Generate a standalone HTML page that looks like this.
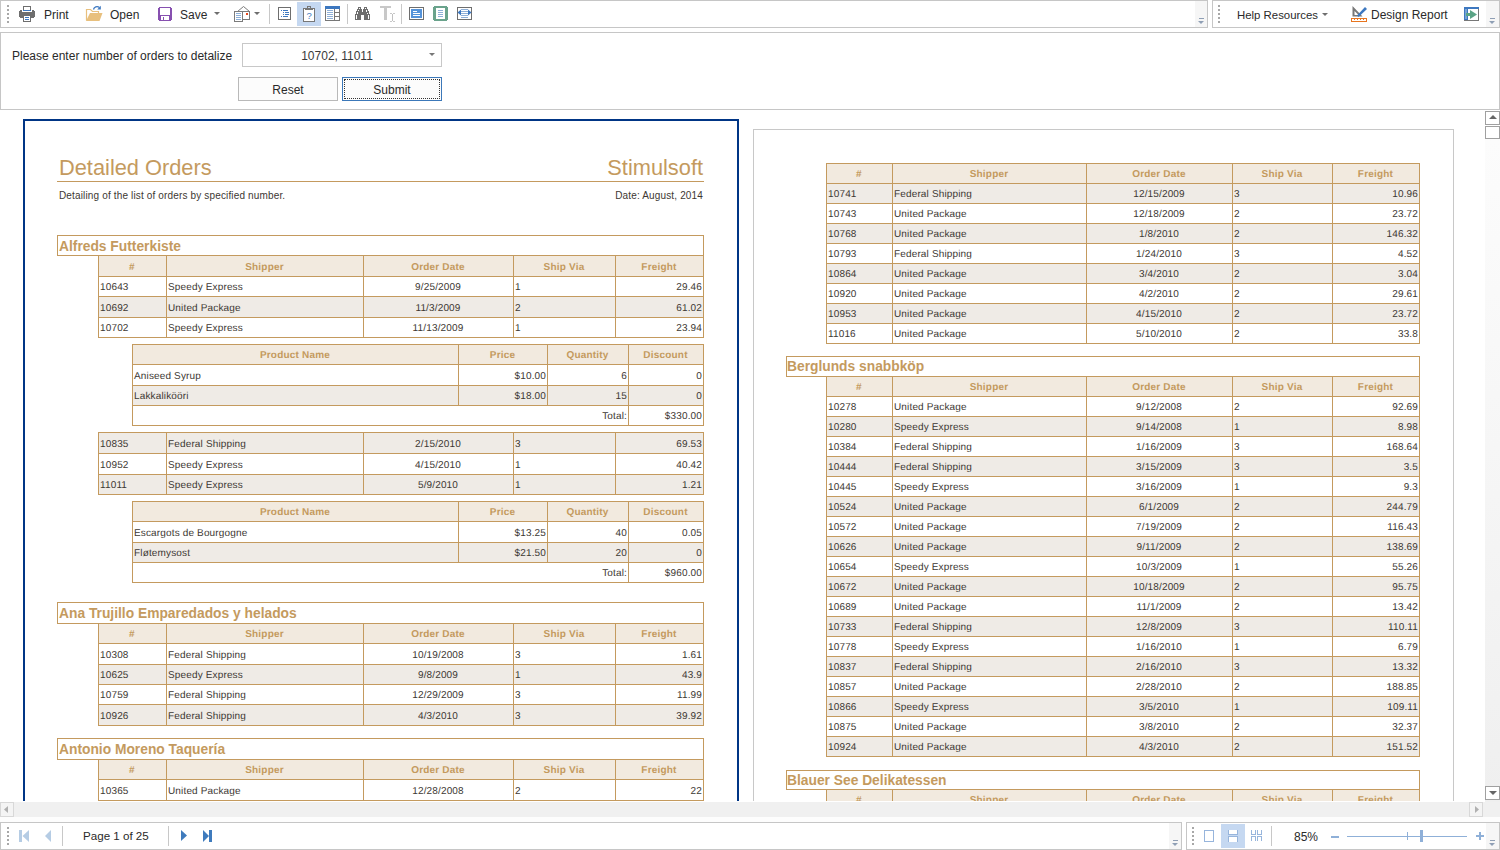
<!DOCTYPE html>
<html><head><meta charset="utf-8"><title>Report Viewer</title>
<style>
*{margin:0;padding:0;box-sizing:border-box;}
html,body{width:1500px;height:850px;overflow:hidden;background:#ffffff;font-family:"Liberation Sans",sans-serif;}
.abs{position:absolute;}
.ui{position:absolute;font-size:12px;color:#2a2a2a;white-space:nowrap;line-height:14px;}
.tb{position:absolute;border:1px solid #c6c6c6;background:#fff;}
.grip{position:absolute;width:2px;height:18px;background:repeating-linear-gradient(to bottom,#a8a8a8 0,#a8a8a8 2px,transparent 2px,transparent 4px);}
.sep{position:absolute;width:1px;background:#c8c8c8;}
.ovf{position:absolute;background:#f6f6f6;}
.ovf i{position:absolute;left:4px;width:5px;height:1px;background:#8f9fb5;}
.ovf b{position:absolute;left:3px;width:0;height:0;border-left:3.5px solid transparent;border-right:3.5px solid transparent;border-top:3.5px solid #8f9fb5;}
#rep{position:absolute;left:0;top:110px;width:1485px;height:691px;overflow:hidden;background:#fff;}
#rin{position:absolute;left:0;top:-110px;width:1484px;height:850px;}
.b{position:absolute;}
.t,.h,.g{position:absolute;white-space:nowrap;text-rendering:geometricPrecision;font-size:10px;letter-spacing:0.15px;color:#3d3833;}
.t{padding-top:2px;}
.h{padding-top:2px;}
.h{font-weight:bold;color:#c49a5e;font-size:10px;letter-spacing:0.2px;}
.pl{padding-left:2px;}
.pr{padding-right:1px;}
.g{text-rendering:auto;font-weight:bold;font-size:13.8px;letter-spacing:0;color:#c49a5e;padding-top:1px;}
.title{position:absolute;font-size:21.8px;color:#c49a5e;line-height:26px;white-space:nowrap;}
.sub{position:absolute;font-size:10px;letter-spacing:0.15px;color:#3d3833;line-height:14px;white-space:nowrap;}
.page1{position:absolute;left:23px;top:119px;width:716px;height:800px;border:2px solid #003585;background:#fff;}
.page2{position:absolute;left:753px;top:129px;width:701px;height:800px;border:1px solid #c8c8c8;background:#fff;}
</style></head>
<body>
<!-- top toolbar -->
<div class="tb" style="left:0;top:0;width:1208px;height:28px;"></div>
<div class="grip" style="left:7px;top:5px;"></div>
<div class="ui" style="left:44px;top:8px;">Print</div>
<div class="ui" style="left:110px;top:8px;">Open</div>
<div class="ui" style="left:180px;top:8px;">Save</div>
<div class="sep" style="left:269px;top:4px;height:20px;"></div>
<div class="abs" style="left:297px;top:2px;width:24px;height:24px;background:#c5d8f1;"></div>
<div class="sep" style="left:347px;top:4px;height:20px;"></div>
<div class="sep" style="left:401px;top:4px;height:20px;"></div>
<svg class="abs" style="left:0;top:0" width="500" height="28" viewBox="0 0 500 28">
<g shape-rendering="crispEdges">
 <!-- printer -->
 <rect x="23" y="6" width="8" height="5" fill="#6e6e6e"/><rect x="24" y="7" width="6" height="3" fill="#fff"/><rect x="23" y="10" width="8" height="1" fill="#3d78c0"/>
 <rect x="20" y="10" width="2" height="1" fill="#6e6e6e"/><rect x="32" y="10" width="2" height="1" fill="#6e6e6e"/>
 <rect x="19" y="11" width="3" height="1" fill="#6e6e6e"/><rect x="32" y="11" width="3" height="1" fill="#6e6e6e"/>
 <rect x="19" y="12" width="16" height="5" fill="#6e6e6e"/><rect x="20" y="17" width="14" height="1" fill="#6e6e6e"/>
 <rect x="23" y="15" width="8" height="7" fill="#6e6e6e"/><rect x="24" y="16" width="6" height="5" fill="#fff"/>
 <rect x="25" y="17" width="4" height="1" fill="#3d78c0"/><rect x="25" y="19" width="4" height="1" fill="#3d78c0"/>
 <!-- save -->
 <rect x="159" y="7" width="12" height="14" fill="#8750b0"/><rect x="158" y="8" width="14" height="12" fill="#8750b0"/>
 <rect x="160" y="8" width="10" height="7" fill="#fff"/>
 <rect x="161" y="16" width="8" height="4" fill="#fff"/><rect x="163" y="17" width="1" height="3" fill="#8750b0"/>
 <!-- send -->
 <rect x="242" y="11" width="8" height="9" fill="#7b7b7b"/><rect x="243" y="12" width="6" height="7" fill="#fff"/>
 <rect x="246" y="13" width="2" height="2" fill="#e84a1e"/>
 <rect x="234" y="11" width="9" height="11" fill="#7b7b7b"/><rect x="235" y="12" width="7" height="9" fill="#fff"/>
 <rect x="236" y="13" width="5" height="1" fill="#8db0d9"/><rect x="236" y="15" width="5" height="1" fill="#8db0d9"/><rect x="236" y="17" width="5" height="1" fill="#8db0d9"/><rect x="236" y="19" width="5" height="1" fill="#8db0d9"/>
 <!-- icon list -->
 <rect x="278" y="7" width="13" height="13" fill="#6e6e6e"/><rect x="279" y="8" width="11" height="11" fill="#fff"/>
 <rect x="281" y="10" width="1" height="1" fill="#3d78c0"/><rect x="283" y="10" width="5" height="1" fill="#3d78c0"/>
 <rect x="283" y="12" width="1" height="1" fill="#3d78c0"/><rect x="285" y="12" width="4" height="1" fill="#3d78c0"/>
 <rect x="283" y="14" width="1" height="1" fill="#3d78c0"/><rect x="285" y="14" width="4" height="1" fill="#3d78c0"/>
 <rect x="281" y="16" width="1" height="1" fill="#3d78c0"/><rect x="283" y="16" width="5" height="1" fill="#3d78c0"/>
 <!-- clipboard -->
 <rect x="303" y="8" width="12" height="14" fill="#777"/><rect x="304" y="9" width="10" height="12" fill="#fff"/>
 <rect x="305" y="8" width="8" height="2" fill="#777"/><rect x="307" y="6" width="4" height="2" fill="#777"/><rect x="308" y="7" width="2" height="1" fill="#c5d8f1"/>
 <!-- table icon -->
 <rect x="325" y="6" width="15" height="15" fill="#777"/><rect x="326" y="9" width="13" height="11" fill="#fff"/>
 <rect x="325" y="6" width="15" height="3" fill="#3d78c0"/>
 <rect x="334" y="9" width="1" height="11" fill="#777"/><rect x="335" y="12" width="4" height="1" fill="#777"/><rect x="335" y="16" width="4" height="1" fill="#777"/>
 <rect x="327" y="10" width="6" height="1" fill="#8fb0d8"/><rect x="327" y="12" width="6" height="1" fill="#8fb0d8"/><rect x="327" y="14" width="6" height="1" fill="#8fb0d8"/><rect x="327" y="16" width="6" height="1" fill="#8fb0d8"/><rect x="327" y="18" width="6" height="1" fill="#8fb0d8"/>
 <!-- binoculars -->
 <rect x="358" y="7" width="3" height="2" fill="#6e6e6e"/><rect x="364" y="7" width="3" height="2" fill="#6e6e6e"/>
 <rect x="357" y="9" width="5" height="2" fill="#6e6e6e"/><rect x="363" y="9" width="5" height="2" fill="#6e6e6e"/>
 <rect x="356" y="11" width="6" height="3" fill="#6e6e6e"/><rect x="363" y="11" width="6" height="3" fill="#6e6e6e"/>
 <rect x="361" y="12" width="3" height="3" fill="#6e6e6e"/>
 <rect x="355" y="14" width="6" height="6" fill="#6e6e6e"/><rect x="364" y="14" width="6" height="6" fill="#6e6e6e"/>
 <rect x="359" y="8" width="1" height="1" fill="#fff"/><rect x="365" y="8" width="1" height="1" fill="#fff"/>
 <rect x="358" y="10" width="1" height="1" fill="#fff"/><rect x="366" y="10" width="1" height="2" fill="#fff"/>
 <rect x="357" y="12" width="1" height="2" fill="#fff"/><rect x="367" y="13" width="1" height="1" fill="#fff"/>
 <rect x="356" y="15" width="1" height="4" fill="#fff"/><rect x="368" y="15" width="1" height="4" fill="#fff"/>
 <!-- T -->
 <rect x="380" y="6" width="11" height="2" fill="#c8c8c8"/><rect x="384" y="8" width="3" height="12" fill="#c8c8c8"/>
 <rect x="392" y="14" width="1" height="7" fill="#c0c0c0"/><rect x="390" y="13" width="2" height="1" fill="#c8c8c8"/><rect x="393" y="13" width="2" height="1" fill="#c8c8c8"/>
 <rect x="390" y="21" width="2" height="1" fill="#c8c8c8"/><rect x="393" y="21" width="2" height="1" fill="#c8c8c8"/>
 <!-- one page -->
 <rect x="409" y="7" width="15" height="13" fill="#6e6e6e"/><rect x="410" y="8" width="13" height="11" fill="#fff"/>
 <rect x="411" y="9" width="11" height="9" fill="#5593d9"/>
 <rect x="413" y="11" width="4" height="1" fill="#fff"/><rect x="413" y="13" width="7" height="1" fill="#fff"/><rect x="413" y="15" width="7" height="1" fill="#fff"/>
 <!-- green page -->
 <rect x="434" y="6" width="13" height="15" fill="#6aa38c"/><rect x="433" y="7" width="15" height="13" fill="#6aa38c"/>
 <rect x="436" y="8" width="9" height="11" fill="#fff"/>
 <rect x="438" y="10" width="5" height="1" fill="#8fb0d8"/><rect x="438" y="12" width="5" height="1" fill="#8fb0d8"/><rect x="438" y="14" width="5" height="1" fill="#8fb0d8"/><rect x="438" y="16" width="5" height="1" fill="#8fb0d8"/>
 <!-- page width -->
 <rect x="457" y="7" width="15" height="13" fill="#6e6e6e"/><rect x="458" y="8" width="13" height="11" fill="#fff"/>
 <rect x="461" y="9" width="7" height="1" fill="#8fb0d8"/><rect x="461" y="11" width="7" height="1" fill="#8fb0d8"/><rect x="461" y="13" width="7" height="1" fill="#8fb0d8"/><rect x="461" y="15" width="7" height="1" fill="#8fb0d8"/><rect x="461" y="17" width="7" height="1" fill="#8fb0d8"/>
</g>
 <!-- folder -->
 <path d="M86.5 20.5V9.5h4l2 2h6v2" fill="none" stroke="#e8c07e" stroke-width="1.2"/>
 <path d="M90 13h12.5l-3 8H86z" fill="#e8c07e"/>
 <path d="M93.5 9.5c0.5-2.5 3.5-4 6-2" fill="none" stroke="#3d78c0" stroke-width="1.3"/>
 <path d="M100.8 5.8v3.7h-3.6z" fill="#3d78c0"/>
 <!-- dropdown arrows -->
 <path d="M214 12h6l-3 3z" fill="#6e6e6e"/>
 <path d="M254 12h6l-3 3z" fill="#6e6e6e"/>
 <!-- send roof -->
 <path d="M237.5 11.5L243.5 6.5 249.5 11.5" fill="none" stroke="#7b7b7b" stroke-width="1"/>
 <!-- question mark -->
 <text x="309.2" y="18.5" font-size="9.5" font-family="Liberation Sans" fill="#3d78c0" text-anchor="middle">?</text>
 <!-- arrows -->
 <path d="M457.5 12.5L461 9.5v6z" fill="#3d78c0"/><path d="M471.5 12.5L468 9.5v6z" fill="#3d78c0"/>
</svg>
<div class="ovf" style="left:1195px;top:1px;width:12px;height:26px;"><i style="top:17px"></i><b style="top:20px"></b></div>
<!-- right toolbar -->
<div class="tb" style="left:1212px;top:0;width:288px;height:28px;"></div>
<div class="grip" style="left:1218px;top:5px;"></div>
<div class="ui" style="left:1237px;top:8px;font-size:11.4px;">Help Resources</div>
<div class="ui" style="left:1371px;top:8px;">Design Report</div>
<svg class="abs" style="left:1300px;top:0" width="200" height="28" viewBox="1300 0 200 28">
 <path d="M1322 13h6l-3 3z" fill="#6e6e6e"/>
 <path d="M1352.5 6v10.5h10l-10-10.5z M1354.5 11v4h4z" fill="#777" fill-rule="evenodd"/>
 <path d="M1357 15.5l8-8.5 2 2-8.5 8z" fill="#3d78c0"/>
 <g shape-rendering="crispEdges">
 <rect x="1351" y="18" width="16" height="4" fill="#e8751f"/><rect x="1352" y="19" width="14" height="2" fill="#fff"/>
 <rect x="1354" y="19" width="1" height="1" fill="#e8751f"/><rect x="1357" y="19" width="1" height="1" fill="#e8751f"/><rect x="1360" y="19" width="1" height="1" fill="#e8751f"/><rect x="1363" y="19" width="1" height="1" fill="#e8751f"/>
 <rect x="1464" y="7" width="15" height="14" fill="#777"/><rect x="1465" y="9" width="13" height="11" fill="#fff"/>
 <rect x="1464" y="7" width="15" height="2" fill="#3d78c0"/><rect x="1464" y="7" width="4" height="13" fill="#3d78c0"/><rect x="1465" y="9" width="2" height="10" fill="#77a3d6"/>
 <rect x="1466" y="13" width="6" height="3" fill="#5ba486"/>
 </g>
 <path d="M1470 10l7 4.5-7 4.5z" fill="#5ba486"/>
</svg>
<div class="ovf" style="left:1486px;top:1px;width:13px;height:26px;"><i style="top:17px"></i><b style="top:20px"></b></div>

<!-- parameters panel -->
<div class="tb" style="left:0;top:32px;width:1500px;height:78px;"></div>
<div class="ui" style="left:12px;top:49px;">Please enter number of orders to detalize</div>
<div class="abs" style="left:242px;top:43px;width:200px;height:24px;border:1px solid #c8c8c8;background:#fff;"></div>
<div class="ui" style="left:242px;top:49px;width:190px;text-align:center;color:#3a3a3a;">10702, 11011</div>
<svg class="abs" style="left:429px;top:53px" width="6" height="3" viewBox="0 0 6 3"><path d="M0 0h6L3 3z" fill="#777"/></svg>
<div class="abs" style="left:238px;top:77px;width:100px;height:24px;border:1px solid #b9b9b9;background:#fcfcfc;"></div>
<div class="ui" style="left:238px;top:83px;width:100px;text-align:center;">Reset</div>
<div class="abs" style="left:342px;top:77px;width:100px;height:24px;border:1px solid #3c78b9;background:#fcfcfc;"></div>
<div class="abs" style="left:344px;top:79px;width:96px;height:20px;border:1px dotted #333;"></div>
<div class="ui" style="left:342px;top:83px;width:100px;text-align:center;">Submit</div>

<!-- report area -->
<div id="rep"><div id="rin">
<div class="page1"></div>
<div class="title" style="left:59px;top:155px;">Detailed Orders</div>
<div class="title" style="left:500px;width:203px;text-align:right;top:155px;">Stimulsoft</div>
<div style="position:absolute;left:57px;top:181px;width:647px;height:1px;background:#c49a5e"></div>
<div class="sub" style="left:59px;top:189px;">Detailing of the list of orders by specified number.</div>
<div class="sub" style="left:500px;width:203px;text-align:right;top:189px;">Date: August, 2014</div>
<div class="b" style="left:57px;top:235px;width:647px;height:21px;border:1px solid #c49a5e;background:#ffffff;"></div>
<div class="g" style="left:59px;top:236px;height:20px;line-height:20px;">Alfreds Futterkiste</div>
<div class="b" style="left:98px;top:255px;width:69px;height:22px;border:1px solid #c49a5e;background:#f2eadf;"></div>
<div class="h" style="left:98px;top:255px;width:68px;height:21px;line-height:21px;text-align:center;">#</div>
<div class="b" style="left:166px;top:255px;width:198px;height:22px;border:1px solid #c49a5e;background:#f2eadf;"></div>
<div class="h" style="left:166px;top:255px;width:197px;height:21px;line-height:21px;text-align:center;">Shipper</div>
<div class="b" style="left:363px;top:255px;width:151px;height:22px;border:1px solid #c49a5e;background:#f2eadf;"></div>
<div class="h" style="left:363px;top:255px;width:150px;height:21px;line-height:21px;text-align:center;">Order Date</div>
<div class="b" style="left:513px;top:255px;width:103px;height:22px;border:1px solid #c49a5e;background:#f2eadf;"></div>
<div class="h" style="left:513px;top:255px;width:102px;height:21px;line-height:21px;text-align:center;">Ship Via</div>
<div class="b" style="left:615px;top:255px;width:89px;height:22px;border:1px solid #c49a5e;background:#f2eadf;"></div>
<div class="h" style="left:615px;top:255px;width:88px;height:21px;line-height:21px;text-align:center;">Freight</div>
<div class="b" style="left:98px;top:276px;width:69px;height:21px;border:1px solid #c49a5e;background:#ffffff;"></div>
<div class="t pl" style="left:98px;top:276px;width:68px;height:20px;line-height:20px;text-align:left;">10643</div>
<div class="b" style="left:166px;top:276px;width:198px;height:21px;border:1px solid #c49a5e;background:#ffffff;"></div>
<div class="t pl" style="left:166px;top:276px;width:197px;height:20px;line-height:20px;text-align:left;">Speedy Express</div>
<div class="b" style="left:363px;top:276px;width:151px;height:21px;border:1px solid #c49a5e;background:#ffffff;"></div>
<div class="t " style="left:363px;top:276px;width:150px;height:20px;line-height:20px;text-align:center;">9/25/2009</div>
<div class="b" style="left:513px;top:276px;width:103px;height:21px;border:1px solid #c49a5e;background:#ffffff;"></div>
<div class="t pl" style="left:513px;top:276px;width:102px;height:20px;line-height:20px;text-align:left;">1</div>
<div class="b" style="left:615px;top:276px;width:89px;height:21px;border:1px solid #c49a5e;background:#ffffff;"></div>
<div class="t pr" style="left:615px;top:276px;width:88px;height:20px;line-height:20px;text-align:right;">29.46</div>
<div class="b" style="left:98px;top:296px;width:69px;height:22px;border:1px solid #c49a5e;background:#efebe6;"></div>
<div class="t pl" style="left:98px;top:296px;width:68px;height:21px;line-height:21px;text-align:left;">10692</div>
<div class="b" style="left:166px;top:296px;width:198px;height:22px;border:1px solid #c49a5e;background:#efebe6;"></div>
<div class="t pl" style="left:166px;top:296px;width:197px;height:21px;line-height:21px;text-align:left;">United Package</div>
<div class="b" style="left:363px;top:296px;width:151px;height:22px;border:1px solid #c49a5e;background:#efebe6;"></div>
<div class="t " style="left:363px;top:296px;width:150px;height:21px;line-height:21px;text-align:center;">11/3/2009</div>
<div class="b" style="left:513px;top:296px;width:103px;height:22px;border:1px solid #c49a5e;background:#efebe6;"></div>
<div class="t pl" style="left:513px;top:296px;width:102px;height:21px;line-height:21px;text-align:left;">2</div>
<div class="b" style="left:615px;top:296px;width:89px;height:22px;border:1px solid #c49a5e;background:#efebe6;"></div>
<div class="t pr" style="left:615px;top:296px;width:88px;height:21px;line-height:21px;text-align:right;">61.02</div>
<div class="b" style="left:98px;top:317px;width:69px;height:21px;border:1px solid #c49a5e;background:#ffffff;"></div>
<div class="t pl" style="left:98px;top:317px;width:68px;height:20px;line-height:20px;text-align:left;">10702</div>
<div class="b" style="left:166px;top:317px;width:198px;height:21px;border:1px solid #c49a5e;background:#ffffff;"></div>
<div class="t pl" style="left:166px;top:317px;width:197px;height:20px;line-height:20px;text-align:left;">Speedy Express</div>
<div class="b" style="left:363px;top:317px;width:151px;height:21px;border:1px solid #c49a5e;background:#ffffff;"></div>
<div class="t " style="left:363px;top:317px;width:150px;height:20px;line-height:20px;text-align:center;">11/13/2009</div>
<div class="b" style="left:513px;top:317px;width:103px;height:21px;border:1px solid #c49a5e;background:#ffffff;"></div>
<div class="t pl" style="left:513px;top:317px;width:102px;height:20px;line-height:20px;text-align:left;">1</div>
<div class="b" style="left:615px;top:317px;width:89px;height:21px;border:1px solid #c49a5e;background:#ffffff;"></div>
<div class="t pr" style="left:615px;top:317px;width:88px;height:20px;line-height:20px;text-align:right;">23.94</div>
<div class="b" style="left:132px;top:344px;width:327px;height:21px;border:1px solid #c49a5e;background:#f2eadf;"></div>
<div class="h" style="left:132px;top:344px;width:326px;height:20px;line-height:20px;text-align:center;">Product Name</div>
<div class="b" style="left:458px;top:344px;width:90px;height:21px;border:1px solid #c49a5e;background:#f2eadf;"></div>
<div class="h" style="left:458px;top:344px;width:89px;height:20px;line-height:20px;text-align:center;">Price</div>
<div class="b" style="left:547px;top:344px;width:82px;height:21px;border:1px solid #c49a5e;background:#f2eadf;"></div>
<div class="h" style="left:547px;top:344px;width:81px;height:20px;line-height:20px;text-align:center;">Quantity</div>
<div class="b" style="left:628px;top:344px;width:76px;height:21px;border:1px solid #c49a5e;background:#f2eadf;"></div>
<div class="h" style="left:628px;top:344px;width:75px;height:20px;line-height:20px;text-align:center;">Discount</div>
<div class="b" style="left:132px;top:364px;width:327px;height:22px;border:1px solid #c49a5e;background:#ffffff;"></div>
<div class="t pl" style="left:132px;top:364px;width:326px;height:21px;line-height:21px;text-align:left;">Aniseed Syrup</div>
<div class="b" style="left:458px;top:364px;width:90px;height:22px;border:1px solid #c49a5e;background:#ffffff;"></div>
<div class="t pr" style="left:458px;top:364px;width:89px;height:21px;line-height:21px;text-align:right;">$10.00</div>
<div class="b" style="left:547px;top:364px;width:82px;height:22px;border:1px solid #c49a5e;background:#ffffff;"></div>
<div class="t pr" style="left:547px;top:364px;width:81px;height:21px;line-height:21px;text-align:right;">6</div>
<div class="b" style="left:628px;top:364px;width:76px;height:22px;border:1px solid #c49a5e;background:#ffffff;"></div>
<div class="t pr" style="left:628px;top:364px;width:75px;height:21px;line-height:21px;text-align:right;">0</div>
<div class="b" style="left:132px;top:385px;width:327px;height:21px;border:1px solid #c49a5e;background:#efebe6;"></div>
<div class="t pl" style="left:132px;top:385px;width:326px;height:20px;line-height:20px;text-align:left;">Lakkalik&ouml;&ouml;ri</div>
<div class="b" style="left:458px;top:385px;width:90px;height:21px;border:1px solid #c49a5e;background:#efebe6;"></div>
<div class="t pr" style="left:458px;top:385px;width:89px;height:20px;line-height:20px;text-align:right;">$18.00</div>
<div class="b" style="left:547px;top:385px;width:82px;height:21px;border:1px solid #c49a5e;background:#efebe6;"></div>
<div class="t pr" style="left:547px;top:385px;width:81px;height:20px;line-height:20px;text-align:right;">15</div>
<div class="b" style="left:628px;top:385px;width:76px;height:21px;border:1px solid #c49a5e;background:#efebe6;"></div>
<div class="t pr" style="left:628px;top:385px;width:75px;height:20px;line-height:20px;text-align:right;">0</div>
<div class="b" style="left:132px;top:405px;width:497px;height:21px;border:1px solid #c49a5e;background:#ffffff;"></div>
<div class="b" style="left:628px;top:405px;width:76px;height:21px;border:1px solid #c49a5e;background:#ffffff;"></div>
<div class="t pr" style="left:132px;top:405px;width:496px;height:20px;line-height:20px;text-align:right;">Total:</div>
<div class="t pr" style="left:628px;top:405px;width:75px;height:20px;line-height:20px;text-align:right;">$330.00</div>
<div class="b" style="left:98px;top:432px;width:69px;height:22px;border:1px solid #c49a5e;background:#efebe6;"></div>
<div class="t pl" style="left:98px;top:432px;width:68px;height:21px;line-height:21px;text-align:left;">10835</div>
<div class="b" style="left:166px;top:432px;width:198px;height:22px;border:1px solid #c49a5e;background:#efebe6;"></div>
<div class="t pl" style="left:166px;top:432px;width:197px;height:21px;line-height:21px;text-align:left;">Federal Shipping</div>
<div class="b" style="left:363px;top:432px;width:151px;height:22px;border:1px solid #c49a5e;background:#efebe6;"></div>
<div class="t " style="left:363px;top:432px;width:150px;height:21px;line-height:21px;text-align:center;">2/15/2010</div>
<div class="b" style="left:513px;top:432px;width:103px;height:22px;border:1px solid #c49a5e;background:#efebe6;"></div>
<div class="t pl" style="left:513px;top:432px;width:102px;height:21px;line-height:21px;text-align:left;">3</div>
<div class="b" style="left:615px;top:432px;width:89px;height:22px;border:1px solid #c49a5e;background:#efebe6;"></div>
<div class="t pr" style="left:615px;top:432px;width:88px;height:21px;line-height:21px;text-align:right;">69.53</div>
<div class="b" style="left:98px;top:453px;width:69px;height:22px;border:1px solid #c49a5e;background:#ffffff;"></div>
<div class="t pl" style="left:98px;top:453px;width:68px;height:21px;line-height:21px;text-align:left;">10952</div>
<div class="b" style="left:166px;top:453px;width:198px;height:22px;border:1px solid #c49a5e;background:#ffffff;"></div>
<div class="t pl" style="left:166px;top:453px;width:197px;height:21px;line-height:21px;text-align:left;">Speedy Express</div>
<div class="b" style="left:363px;top:453px;width:151px;height:22px;border:1px solid #c49a5e;background:#ffffff;"></div>
<div class="t " style="left:363px;top:453px;width:150px;height:21px;line-height:21px;text-align:center;">4/15/2010</div>
<div class="b" style="left:513px;top:453px;width:103px;height:22px;border:1px solid #c49a5e;background:#ffffff;"></div>
<div class="t pl" style="left:513px;top:453px;width:102px;height:21px;line-height:21px;text-align:left;">1</div>
<div class="b" style="left:615px;top:453px;width:89px;height:22px;border:1px solid #c49a5e;background:#ffffff;"></div>
<div class="t pr" style="left:615px;top:453px;width:88px;height:21px;line-height:21px;text-align:right;">40.42</div>
<div class="b" style="left:98px;top:474px;width:69px;height:21px;border:1px solid #c49a5e;background:#efebe6;"></div>
<div class="t pl" style="left:98px;top:474px;width:68px;height:20px;line-height:20px;text-align:left;">11011</div>
<div class="b" style="left:166px;top:474px;width:198px;height:21px;border:1px solid #c49a5e;background:#efebe6;"></div>
<div class="t pl" style="left:166px;top:474px;width:197px;height:20px;line-height:20px;text-align:left;">Speedy Express</div>
<div class="b" style="left:363px;top:474px;width:151px;height:21px;border:1px solid #c49a5e;background:#efebe6;"></div>
<div class="t " style="left:363px;top:474px;width:150px;height:20px;line-height:20px;text-align:center;">5/9/2010</div>
<div class="b" style="left:513px;top:474px;width:103px;height:21px;border:1px solid #c49a5e;background:#efebe6;"></div>
<div class="t pl" style="left:513px;top:474px;width:102px;height:20px;line-height:20px;text-align:left;">1</div>
<div class="b" style="left:615px;top:474px;width:89px;height:21px;border:1px solid #c49a5e;background:#efebe6;"></div>
<div class="t pr" style="left:615px;top:474px;width:88px;height:20px;line-height:20px;text-align:right;">1.21</div>
<div class="b" style="left:132px;top:501px;width:327px;height:21px;border:1px solid #c49a5e;background:#f2eadf;"></div>
<div class="h" style="left:132px;top:501px;width:326px;height:20px;line-height:20px;text-align:center;">Product Name</div>
<div class="b" style="left:458px;top:501px;width:90px;height:21px;border:1px solid #c49a5e;background:#f2eadf;"></div>
<div class="h" style="left:458px;top:501px;width:89px;height:20px;line-height:20px;text-align:center;">Price</div>
<div class="b" style="left:547px;top:501px;width:82px;height:21px;border:1px solid #c49a5e;background:#f2eadf;"></div>
<div class="h" style="left:547px;top:501px;width:81px;height:20px;line-height:20px;text-align:center;">Quantity</div>
<div class="b" style="left:628px;top:501px;width:76px;height:21px;border:1px solid #c49a5e;background:#f2eadf;"></div>
<div class="h" style="left:628px;top:501px;width:75px;height:20px;line-height:20px;text-align:center;">Discount</div>
<div class="b" style="left:132px;top:521px;width:327px;height:22px;border:1px solid #c49a5e;background:#ffffff;"></div>
<div class="t pl" style="left:132px;top:521px;width:326px;height:21px;line-height:21px;text-align:left;">Escargots de Bourgogne</div>
<div class="b" style="left:458px;top:521px;width:90px;height:22px;border:1px solid #c49a5e;background:#ffffff;"></div>
<div class="t pr" style="left:458px;top:521px;width:89px;height:21px;line-height:21px;text-align:right;">$13.25</div>
<div class="b" style="left:547px;top:521px;width:82px;height:22px;border:1px solid #c49a5e;background:#ffffff;"></div>
<div class="t pr" style="left:547px;top:521px;width:81px;height:21px;line-height:21px;text-align:right;">40</div>
<div class="b" style="left:628px;top:521px;width:76px;height:22px;border:1px solid #c49a5e;background:#ffffff;"></div>
<div class="t pr" style="left:628px;top:521px;width:75px;height:21px;line-height:21px;text-align:right;">0.05</div>
<div class="b" style="left:132px;top:542px;width:327px;height:21px;border:1px solid #c49a5e;background:#efebe6;"></div>
<div class="t pl" style="left:132px;top:542px;width:326px;height:20px;line-height:20px;text-align:left;">Fl&oslash;temysost</div>
<div class="b" style="left:458px;top:542px;width:90px;height:21px;border:1px solid #c49a5e;background:#efebe6;"></div>
<div class="t pr" style="left:458px;top:542px;width:89px;height:20px;line-height:20px;text-align:right;">$21.50</div>
<div class="b" style="left:547px;top:542px;width:82px;height:21px;border:1px solid #c49a5e;background:#efebe6;"></div>
<div class="t pr" style="left:547px;top:542px;width:81px;height:20px;line-height:20px;text-align:right;">20</div>
<div class="b" style="left:628px;top:542px;width:76px;height:21px;border:1px solid #c49a5e;background:#efebe6;"></div>
<div class="t pr" style="left:628px;top:542px;width:75px;height:20px;line-height:20px;text-align:right;">0</div>
<div class="b" style="left:132px;top:562px;width:497px;height:21px;border:1px solid #c49a5e;background:#ffffff;"></div>
<div class="b" style="left:628px;top:562px;width:76px;height:21px;border:1px solid #c49a5e;background:#ffffff;"></div>
<div class="t pr" style="left:132px;top:562px;width:496px;height:20px;line-height:20px;text-align:right;">Total:</div>
<div class="t pr" style="left:628px;top:562px;width:75px;height:20px;line-height:20px;text-align:right;">$960.00</div>
<div class="b" style="left:57px;top:602px;width:647px;height:22px;border:1px solid #c49a5e;background:#ffffff;"></div>
<div class="g" style="left:59px;top:602px;height:21px;line-height:21px;">Ana Trujillo Emparedados y helados</div>
<div class="b" style="left:98px;top:623px;width:69px;height:21px;border:1px solid #c49a5e;background:#f2eadf;"></div>
<div class="h" style="left:98px;top:623px;width:68px;height:20px;line-height:20px;text-align:center;">#</div>
<div class="b" style="left:166px;top:623px;width:198px;height:21px;border:1px solid #c49a5e;background:#f2eadf;"></div>
<div class="h" style="left:166px;top:623px;width:197px;height:20px;line-height:20px;text-align:center;">Shipper</div>
<div class="b" style="left:363px;top:623px;width:151px;height:21px;border:1px solid #c49a5e;background:#f2eadf;"></div>
<div class="h" style="left:363px;top:623px;width:150px;height:20px;line-height:20px;text-align:center;">Order Date</div>
<div class="b" style="left:513px;top:623px;width:103px;height:21px;border:1px solid #c49a5e;background:#f2eadf;"></div>
<div class="h" style="left:513px;top:623px;width:102px;height:20px;line-height:20px;text-align:center;">Ship Via</div>
<div class="b" style="left:615px;top:623px;width:89px;height:21px;border:1px solid #c49a5e;background:#f2eadf;"></div>
<div class="h" style="left:615px;top:623px;width:88px;height:20px;line-height:20px;text-align:center;">Freight</div>
<div class="b" style="left:98px;top:643px;width:69px;height:22px;border:1px solid #c49a5e;background:#ffffff;"></div>
<div class="t pl" style="left:98px;top:643px;width:68px;height:21px;line-height:21px;text-align:left;">10308</div>
<div class="b" style="left:166px;top:643px;width:198px;height:22px;border:1px solid #c49a5e;background:#ffffff;"></div>
<div class="t pl" style="left:166px;top:643px;width:197px;height:21px;line-height:21px;text-align:left;">Federal Shipping</div>
<div class="b" style="left:363px;top:643px;width:151px;height:22px;border:1px solid #c49a5e;background:#ffffff;"></div>
<div class="t " style="left:363px;top:643px;width:150px;height:21px;line-height:21px;text-align:center;">10/19/2008</div>
<div class="b" style="left:513px;top:643px;width:103px;height:22px;border:1px solid #c49a5e;background:#ffffff;"></div>
<div class="t pl" style="left:513px;top:643px;width:102px;height:21px;line-height:21px;text-align:left;">3</div>
<div class="b" style="left:615px;top:643px;width:89px;height:22px;border:1px solid #c49a5e;background:#ffffff;"></div>
<div class="t pr" style="left:615px;top:643px;width:88px;height:21px;line-height:21px;text-align:right;">1.61</div>
<div class="b" style="left:98px;top:664px;width:69px;height:21px;border:1px solid #c49a5e;background:#efebe6;"></div>
<div class="t pl" style="left:98px;top:664px;width:68px;height:20px;line-height:20px;text-align:left;">10625</div>
<div class="b" style="left:166px;top:664px;width:198px;height:21px;border:1px solid #c49a5e;background:#efebe6;"></div>
<div class="t pl" style="left:166px;top:664px;width:197px;height:20px;line-height:20px;text-align:left;">Speedy Express</div>
<div class="b" style="left:363px;top:664px;width:151px;height:21px;border:1px solid #c49a5e;background:#efebe6;"></div>
<div class="t " style="left:363px;top:664px;width:150px;height:20px;line-height:20px;text-align:center;">9/8/2009</div>
<div class="b" style="left:513px;top:664px;width:103px;height:21px;border:1px solid #c49a5e;background:#efebe6;"></div>
<div class="t pl" style="left:513px;top:664px;width:102px;height:20px;line-height:20px;text-align:left;">1</div>
<div class="b" style="left:615px;top:664px;width:89px;height:21px;border:1px solid #c49a5e;background:#efebe6;"></div>
<div class="t pr" style="left:615px;top:664px;width:88px;height:20px;line-height:20px;text-align:right;">43.9</div>
<div class="b" style="left:98px;top:684px;width:69px;height:21px;border:1px solid #c49a5e;background:#ffffff;"></div>
<div class="t pl" style="left:98px;top:684px;width:68px;height:20px;line-height:20px;text-align:left;">10759</div>
<div class="b" style="left:166px;top:684px;width:198px;height:21px;border:1px solid #c49a5e;background:#ffffff;"></div>
<div class="t pl" style="left:166px;top:684px;width:197px;height:20px;line-height:20px;text-align:left;">Federal Shipping</div>
<div class="b" style="left:363px;top:684px;width:151px;height:21px;border:1px solid #c49a5e;background:#ffffff;"></div>
<div class="t " style="left:363px;top:684px;width:150px;height:20px;line-height:20px;text-align:center;">12/29/2009</div>
<div class="b" style="left:513px;top:684px;width:103px;height:21px;border:1px solid #c49a5e;background:#ffffff;"></div>
<div class="t pl" style="left:513px;top:684px;width:102px;height:20px;line-height:20px;text-align:left;">3</div>
<div class="b" style="left:615px;top:684px;width:89px;height:21px;border:1px solid #c49a5e;background:#ffffff;"></div>
<div class="t pr" style="left:615px;top:684px;width:88px;height:20px;line-height:20px;text-align:right;">11.99</div>
<div class="b" style="left:98px;top:704px;width:69px;height:22px;border:1px solid #c49a5e;background:#efebe6;"></div>
<div class="t pl" style="left:98px;top:704px;width:68px;height:21px;line-height:21px;text-align:left;">10926</div>
<div class="b" style="left:166px;top:704px;width:198px;height:22px;border:1px solid #c49a5e;background:#efebe6;"></div>
<div class="t pl" style="left:166px;top:704px;width:197px;height:21px;line-height:21px;text-align:left;">Federal Shipping</div>
<div class="b" style="left:363px;top:704px;width:151px;height:22px;border:1px solid #c49a5e;background:#efebe6;"></div>
<div class="t " style="left:363px;top:704px;width:150px;height:21px;line-height:21px;text-align:center;">4/3/2010</div>
<div class="b" style="left:513px;top:704px;width:103px;height:22px;border:1px solid #c49a5e;background:#efebe6;"></div>
<div class="t pl" style="left:513px;top:704px;width:102px;height:21px;line-height:21px;text-align:left;">3</div>
<div class="b" style="left:615px;top:704px;width:89px;height:22px;border:1px solid #c49a5e;background:#efebe6;"></div>
<div class="t pr" style="left:615px;top:704px;width:88px;height:21px;line-height:21px;text-align:right;">39.92</div>
<div class="b" style="left:57px;top:738px;width:647px;height:22px;border:1px solid #c49a5e;background:#ffffff;"></div>
<div class="g" style="left:59px;top:738px;height:21px;line-height:21px;">Antonio Moreno Taquer&iacute;a</div>
<div class="b" style="left:98px;top:759px;width:69px;height:21px;border:1px solid #c49a5e;background:#f2eadf;"></div>
<div class="h" style="left:98px;top:759px;width:68px;height:20px;line-height:20px;text-align:center;">#</div>
<div class="b" style="left:166px;top:759px;width:198px;height:21px;border:1px solid #c49a5e;background:#f2eadf;"></div>
<div class="h" style="left:166px;top:759px;width:197px;height:20px;line-height:20px;text-align:center;">Shipper</div>
<div class="b" style="left:363px;top:759px;width:151px;height:21px;border:1px solid #c49a5e;background:#f2eadf;"></div>
<div class="h" style="left:363px;top:759px;width:150px;height:20px;line-height:20px;text-align:center;">Order Date</div>
<div class="b" style="left:513px;top:759px;width:103px;height:21px;border:1px solid #c49a5e;background:#f2eadf;"></div>
<div class="h" style="left:513px;top:759px;width:102px;height:20px;line-height:20px;text-align:center;">Ship Via</div>
<div class="b" style="left:615px;top:759px;width:89px;height:21px;border:1px solid #c49a5e;background:#f2eadf;"></div>
<div class="h" style="left:615px;top:759px;width:88px;height:20px;line-height:20px;text-align:center;">Freight</div>
<div class="b" style="left:98px;top:779px;width:69px;height:22px;border:1px solid #c49a5e;background:#ffffff;"></div>
<div class="t pl" style="left:98px;top:779px;width:68px;height:21px;line-height:21px;text-align:left;">10365</div>
<div class="b" style="left:166px;top:779px;width:198px;height:22px;border:1px solid #c49a5e;background:#ffffff;"></div>
<div class="t pl" style="left:166px;top:779px;width:197px;height:21px;line-height:21px;text-align:left;">United Package</div>
<div class="b" style="left:363px;top:779px;width:151px;height:22px;border:1px solid #c49a5e;background:#ffffff;"></div>
<div class="t " style="left:363px;top:779px;width:150px;height:21px;line-height:21px;text-align:center;">12/28/2008</div>
<div class="b" style="left:513px;top:779px;width:103px;height:22px;border:1px solid #c49a5e;background:#ffffff;"></div>
<div class="t pl" style="left:513px;top:779px;width:102px;height:21px;line-height:21px;text-align:left;">2</div>
<div class="b" style="left:615px;top:779px;width:89px;height:22px;border:1px solid #c49a5e;background:#ffffff;"></div>
<div class="t pr" style="left:615px;top:779px;width:88px;height:21px;line-height:21px;text-align:right;">22</div>
<div class="page2"></div>
<div class="b" style="left:826px;top:163px;width:67px;height:21px;border:1px solid #c49a5e;background:#f2eadf;"></div>
<div class="h" style="left:826px;top:163px;width:66px;height:20px;line-height:20px;text-align:center;">#</div>
<div class="b" style="left:892px;top:163px;width:195px;height:21px;border:1px solid #c49a5e;background:#f2eadf;"></div>
<div class="h" style="left:892px;top:163px;width:194px;height:20px;line-height:20px;text-align:center;">Shipper</div>
<div class="b" style="left:1086px;top:163px;width:147px;height:21px;border:1px solid #c49a5e;background:#f2eadf;"></div>
<div class="h" style="left:1086px;top:163px;width:146px;height:20px;line-height:20px;text-align:center;">Order Date</div>
<div class="b" style="left:1232px;top:163px;width:101px;height:21px;border:1px solid #c49a5e;background:#f2eadf;"></div>
<div class="h" style="left:1232px;top:163px;width:100px;height:20px;line-height:20px;text-align:center;">Ship Via</div>
<div class="b" style="left:1332px;top:163px;width:88px;height:21px;border:1px solid #c49a5e;background:#f2eadf;"></div>
<div class="h" style="left:1332px;top:163px;width:87px;height:20px;line-height:20px;text-align:center;">Freight</div>
<div class="b" style="left:826px;top:183px;width:67px;height:21px;border:1px solid #c49a5e;background:#efebe6;"></div>
<div class="t pl" style="left:826px;top:183px;width:66px;height:20px;line-height:20px;text-align:left;">10741</div>
<div class="b" style="left:892px;top:183px;width:195px;height:21px;border:1px solid #c49a5e;background:#efebe6;"></div>
<div class="t pl" style="left:892px;top:183px;width:194px;height:20px;line-height:20px;text-align:left;">Federal Shipping</div>
<div class="b" style="left:1086px;top:183px;width:147px;height:21px;border:1px solid #c49a5e;background:#efebe6;"></div>
<div class="t " style="left:1086px;top:183px;width:146px;height:20px;line-height:20px;text-align:center;">12/15/2009</div>
<div class="b" style="left:1232px;top:183px;width:101px;height:21px;border:1px solid #c49a5e;background:#efebe6;"></div>
<div class="t pl" style="left:1232px;top:183px;width:100px;height:20px;line-height:20px;text-align:left;">3</div>
<div class="b" style="left:1332px;top:183px;width:88px;height:21px;border:1px solid #c49a5e;background:#efebe6;"></div>
<div class="t pr" style="left:1332px;top:183px;width:87px;height:20px;line-height:20px;text-align:right;">10.96</div>
<div class="b" style="left:826px;top:203px;width:67px;height:21px;border:1px solid #c49a5e;background:#ffffff;"></div>
<div class="t pl" style="left:826px;top:203px;width:66px;height:20px;line-height:20px;text-align:left;">10743</div>
<div class="b" style="left:892px;top:203px;width:195px;height:21px;border:1px solid #c49a5e;background:#ffffff;"></div>
<div class="t pl" style="left:892px;top:203px;width:194px;height:20px;line-height:20px;text-align:left;">United Package</div>
<div class="b" style="left:1086px;top:203px;width:147px;height:21px;border:1px solid #c49a5e;background:#ffffff;"></div>
<div class="t " style="left:1086px;top:203px;width:146px;height:20px;line-height:20px;text-align:center;">12/18/2009</div>
<div class="b" style="left:1232px;top:203px;width:101px;height:21px;border:1px solid #c49a5e;background:#ffffff;"></div>
<div class="t pl" style="left:1232px;top:203px;width:100px;height:20px;line-height:20px;text-align:left;">2</div>
<div class="b" style="left:1332px;top:203px;width:88px;height:21px;border:1px solid #c49a5e;background:#ffffff;"></div>
<div class="t pr" style="left:1332px;top:203px;width:87px;height:20px;line-height:20px;text-align:right;">23.72</div>
<div class="b" style="left:826px;top:223px;width:67px;height:21px;border:1px solid #c49a5e;background:#efebe6;"></div>
<div class="t pl" style="left:826px;top:223px;width:66px;height:20px;line-height:20px;text-align:left;">10768</div>
<div class="b" style="left:892px;top:223px;width:195px;height:21px;border:1px solid #c49a5e;background:#efebe6;"></div>
<div class="t pl" style="left:892px;top:223px;width:194px;height:20px;line-height:20px;text-align:left;">United Package</div>
<div class="b" style="left:1086px;top:223px;width:147px;height:21px;border:1px solid #c49a5e;background:#efebe6;"></div>
<div class="t " style="left:1086px;top:223px;width:146px;height:20px;line-height:20px;text-align:center;">1/8/2010</div>
<div class="b" style="left:1232px;top:223px;width:101px;height:21px;border:1px solid #c49a5e;background:#efebe6;"></div>
<div class="t pl" style="left:1232px;top:223px;width:100px;height:20px;line-height:20px;text-align:left;">2</div>
<div class="b" style="left:1332px;top:223px;width:88px;height:21px;border:1px solid #c49a5e;background:#efebe6;"></div>
<div class="t pr" style="left:1332px;top:223px;width:87px;height:20px;line-height:20px;text-align:right;">146.32</div>
<div class="b" style="left:826px;top:243px;width:67px;height:21px;border:1px solid #c49a5e;background:#ffffff;"></div>
<div class="t pl" style="left:826px;top:243px;width:66px;height:20px;line-height:20px;text-align:left;">10793</div>
<div class="b" style="left:892px;top:243px;width:195px;height:21px;border:1px solid #c49a5e;background:#ffffff;"></div>
<div class="t pl" style="left:892px;top:243px;width:194px;height:20px;line-height:20px;text-align:left;">Federal Shipping</div>
<div class="b" style="left:1086px;top:243px;width:147px;height:21px;border:1px solid #c49a5e;background:#ffffff;"></div>
<div class="t " style="left:1086px;top:243px;width:146px;height:20px;line-height:20px;text-align:center;">1/24/2010</div>
<div class="b" style="left:1232px;top:243px;width:101px;height:21px;border:1px solid #c49a5e;background:#ffffff;"></div>
<div class="t pl" style="left:1232px;top:243px;width:100px;height:20px;line-height:20px;text-align:left;">3</div>
<div class="b" style="left:1332px;top:243px;width:88px;height:21px;border:1px solid #c49a5e;background:#ffffff;"></div>
<div class="t pr" style="left:1332px;top:243px;width:87px;height:20px;line-height:20px;text-align:right;">4.52</div>
<div class="b" style="left:826px;top:263px;width:67px;height:21px;border:1px solid #c49a5e;background:#efebe6;"></div>
<div class="t pl" style="left:826px;top:263px;width:66px;height:20px;line-height:20px;text-align:left;">10864</div>
<div class="b" style="left:892px;top:263px;width:195px;height:21px;border:1px solid #c49a5e;background:#efebe6;"></div>
<div class="t pl" style="left:892px;top:263px;width:194px;height:20px;line-height:20px;text-align:left;">United Package</div>
<div class="b" style="left:1086px;top:263px;width:147px;height:21px;border:1px solid #c49a5e;background:#efebe6;"></div>
<div class="t " style="left:1086px;top:263px;width:146px;height:20px;line-height:20px;text-align:center;">3/4/2010</div>
<div class="b" style="left:1232px;top:263px;width:101px;height:21px;border:1px solid #c49a5e;background:#efebe6;"></div>
<div class="t pl" style="left:1232px;top:263px;width:100px;height:20px;line-height:20px;text-align:left;">2</div>
<div class="b" style="left:1332px;top:263px;width:88px;height:21px;border:1px solid #c49a5e;background:#efebe6;"></div>
<div class="t pr" style="left:1332px;top:263px;width:87px;height:20px;line-height:20px;text-align:right;">3.04</div>
<div class="b" style="left:826px;top:283px;width:67px;height:21px;border:1px solid #c49a5e;background:#ffffff;"></div>
<div class="t pl" style="left:826px;top:283px;width:66px;height:20px;line-height:20px;text-align:left;">10920</div>
<div class="b" style="left:892px;top:283px;width:195px;height:21px;border:1px solid #c49a5e;background:#ffffff;"></div>
<div class="t pl" style="left:892px;top:283px;width:194px;height:20px;line-height:20px;text-align:left;">United Package</div>
<div class="b" style="left:1086px;top:283px;width:147px;height:21px;border:1px solid #c49a5e;background:#ffffff;"></div>
<div class="t " style="left:1086px;top:283px;width:146px;height:20px;line-height:20px;text-align:center;">4/2/2010</div>
<div class="b" style="left:1232px;top:283px;width:101px;height:21px;border:1px solid #c49a5e;background:#ffffff;"></div>
<div class="t pl" style="left:1232px;top:283px;width:100px;height:20px;line-height:20px;text-align:left;">2</div>
<div class="b" style="left:1332px;top:283px;width:88px;height:21px;border:1px solid #c49a5e;background:#ffffff;"></div>
<div class="t pr" style="left:1332px;top:283px;width:87px;height:20px;line-height:20px;text-align:right;">29.61</div>
<div class="b" style="left:826px;top:303px;width:67px;height:21px;border:1px solid #c49a5e;background:#efebe6;"></div>
<div class="t pl" style="left:826px;top:303px;width:66px;height:20px;line-height:20px;text-align:left;">10953</div>
<div class="b" style="left:892px;top:303px;width:195px;height:21px;border:1px solid #c49a5e;background:#efebe6;"></div>
<div class="t pl" style="left:892px;top:303px;width:194px;height:20px;line-height:20px;text-align:left;">United Package</div>
<div class="b" style="left:1086px;top:303px;width:147px;height:21px;border:1px solid #c49a5e;background:#efebe6;"></div>
<div class="t " style="left:1086px;top:303px;width:146px;height:20px;line-height:20px;text-align:center;">4/15/2010</div>
<div class="b" style="left:1232px;top:303px;width:101px;height:21px;border:1px solid #c49a5e;background:#efebe6;"></div>
<div class="t pl" style="left:1232px;top:303px;width:100px;height:20px;line-height:20px;text-align:left;">2</div>
<div class="b" style="left:1332px;top:303px;width:88px;height:21px;border:1px solid #c49a5e;background:#efebe6;"></div>
<div class="t pr" style="left:1332px;top:303px;width:87px;height:20px;line-height:20px;text-align:right;">23.72</div>
<div class="b" style="left:826px;top:323px;width:67px;height:21px;border:1px solid #c49a5e;background:#ffffff;"></div>
<div class="t pl" style="left:826px;top:323px;width:66px;height:20px;line-height:20px;text-align:left;">11016</div>
<div class="b" style="left:892px;top:323px;width:195px;height:21px;border:1px solid #c49a5e;background:#ffffff;"></div>
<div class="t pl" style="left:892px;top:323px;width:194px;height:20px;line-height:20px;text-align:left;">United Package</div>
<div class="b" style="left:1086px;top:323px;width:147px;height:21px;border:1px solid #c49a5e;background:#ffffff;"></div>
<div class="t " style="left:1086px;top:323px;width:146px;height:20px;line-height:20px;text-align:center;">5/10/2010</div>
<div class="b" style="left:1232px;top:323px;width:101px;height:21px;border:1px solid #c49a5e;background:#ffffff;"></div>
<div class="t pl" style="left:1232px;top:323px;width:100px;height:20px;line-height:20px;text-align:left;">2</div>
<div class="b" style="left:1332px;top:323px;width:88px;height:21px;border:1px solid #c49a5e;background:#ffffff;"></div>
<div class="t pr" style="left:1332px;top:323px;width:87px;height:20px;line-height:20px;text-align:right;">33.8</div>
<div class="b" style="left:786px;top:356px;width:634px;height:21px;border:1px solid #c49a5e;background:#ffffff;"></div>
<div class="g" style="left:787px;top:356px;height:20px;line-height:20px;">Berglunds snabbk&ouml;p</div>
<div class="b" style="left:826px;top:376px;width:67px;height:21px;border:1px solid #c49a5e;background:#f2eadf;"></div>
<div class="h" style="left:826px;top:376px;width:66px;height:20px;line-height:20px;text-align:center;">#</div>
<div class="b" style="left:892px;top:376px;width:195px;height:21px;border:1px solid #c49a5e;background:#f2eadf;"></div>
<div class="h" style="left:892px;top:376px;width:194px;height:20px;line-height:20px;text-align:center;">Shipper</div>
<div class="b" style="left:1086px;top:376px;width:147px;height:21px;border:1px solid #c49a5e;background:#f2eadf;"></div>
<div class="h" style="left:1086px;top:376px;width:146px;height:20px;line-height:20px;text-align:center;">Order Date</div>
<div class="b" style="left:1232px;top:376px;width:101px;height:21px;border:1px solid #c49a5e;background:#f2eadf;"></div>
<div class="h" style="left:1232px;top:376px;width:100px;height:20px;line-height:20px;text-align:center;">Ship Via</div>
<div class="b" style="left:1332px;top:376px;width:88px;height:21px;border:1px solid #c49a5e;background:#f2eadf;"></div>
<div class="h" style="left:1332px;top:376px;width:87px;height:20px;line-height:20px;text-align:center;">Freight</div>
<div class="b" style="left:826px;top:396px;width:67px;height:21px;border:1px solid #c49a5e;background:#ffffff;"></div>
<div class="t pl" style="left:826px;top:396px;width:66px;height:20px;line-height:20px;text-align:left;">10278</div>
<div class="b" style="left:892px;top:396px;width:195px;height:21px;border:1px solid #c49a5e;background:#ffffff;"></div>
<div class="t pl" style="left:892px;top:396px;width:194px;height:20px;line-height:20px;text-align:left;">United Package</div>
<div class="b" style="left:1086px;top:396px;width:147px;height:21px;border:1px solid #c49a5e;background:#ffffff;"></div>
<div class="t " style="left:1086px;top:396px;width:146px;height:20px;line-height:20px;text-align:center;">9/12/2008</div>
<div class="b" style="left:1232px;top:396px;width:101px;height:21px;border:1px solid #c49a5e;background:#ffffff;"></div>
<div class="t pl" style="left:1232px;top:396px;width:100px;height:20px;line-height:20px;text-align:left;">2</div>
<div class="b" style="left:1332px;top:396px;width:88px;height:21px;border:1px solid #c49a5e;background:#ffffff;"></div>
<div class="t pr" style="left:1332px;top:396px;width:87px;height:20px;line-height:20px;text-align:right;">92.69</div>
<div class="b" style="left:826px;top:416px;width:67px;height:21px;border:1px solid #c49a5e;background:#efebe6;"></div>
<div class="t pl" style="left:826px;top:416px;width:66px;height:20px;line-height:20px;text-align:left;">10280</div>
<div class="b" style="left:892px;top:416px;width:195px;height:21px;border:1px solid #c49a5e;background:#efebe6;"></div>
<div class="t pl" style="left:892px;top:416px;width:194px;height:20px;line-height:20px;text-align:left;">Speedy Express</div>
<div class="b" style="left:1086px;top:416px;width:147px;height:21px;border:1px solid #c49a5e;background:#efebe6;"></div>
<div class="t " style="left:1086px;top:416px;width:146px;height:20px;line-height:20px;text-align:center;">9/14/2008</div>
<div class="b" style="left:1232px;top:416px;width:101px;height:21px;border:1px solid #c49a5e;background:#efebe6;"></div>
<div class="t pl" style="left:1232px;top:416px;width:100px;height:20px;line-height:20px;text-align:left;">1</div>
<div class="b" style="left:1332px;top:416px;width:88px;height:21px;border:1px solid #c49a5e;background:#efebe6;"></div>
<div class="t pr" style="left:1332px;top:416px;width:87px;height:20px;line-height:20px;text-align:right;">8.98</div>
<div class="b" style="left:826px;top:436px;width:67px;height:21px;border:1px solid #c49a5e;background:#ffffff;"></div>
<div class="t pl" style="left:826px;top:436px;width:66px;height:20px;line-height:20px;text-align:left;">10384</div>
<div class="b" style="left:892px;top:436px;width:195px;height:21px;border:1px solid #c49a5e;background:#ffffff;"></div>
<div class="t pl" style="left:892px;top:436px;width:194px;height:20px;line-height:20px;text-align:left;">Federal Shipping</div>
<div class="b" style="left:1086px;top:436px;width:147px;height:21px;border:1px solid #c49a5e;background:#ffffff;"></div>
<div class="t " style="left:1086px;top:436px;width:146px;height:20px;line-height:20px;text-align:center;">1/16/2009</div>
<div class="b" style="left:1232px;top:436px;width:101px;height:21px;border:1px solid #c49a5e;background:#ffffff;"></div>
<div class="t pl" style="left:1232px;top:436px;width:100px;height:20px;line-height:20px;text-align:left;">3</div>
<div class="b" style="left:1332px;top:436px;width:88px;height:21px;border:1px solid #c49a5e;background:#ffffff;"></div>
<div class="t pr" style="left:1332px;top:436px;width:87px;height:20px;line-height:20px;text-align:right;">168.64</div>
<div class="b" style="left:826px;top:456px;width:67px;height:21px;border:1px solid #c49a5e;background:#efebe6;"></div>
<div class="t pl" style="left:826px;top:456px;width:66px;height:20px;line-height:20px;text-align:left;">10444</div>
<div class="b" style="left:892px;top:456px;width:195px;height:21px;border:1px solid #c49a5e;background:#efebe6;"></div>
<div class="t pl" style="left:892px;top:456px;width:194px;height:20px;line-height:20px;text-align:left;">Federal Shipping</div>
<div class="b" style="left:1086px;top:456px;width:147px;height:21px;border:1px solid #c49a5e;background:#efebe6;"></div>
<div class="t " style="left:1086px;top:456px;width:146px;height:20px;line-height:20px;text-align:center;">3/15/2009</div>
<div class="b" style="left:1232px;top:456px;width:101px;height:21px;border:1px solid #c49a5e;background:#efebe6;"></div>
<div class="t pl" style="left:1232px;top:456px;width:100px;height:20px;line-height:20px;text-align:left;">3</div>
<div class="b" style="left:1332px;top:456px;width:88px;height:21px;border:1px solid #c49a5e;background:#efebe6;"></div>
<div class="t pr" style="left:1332px;top:456px;width:87px;height:20px;line-height:20px;text-align:right;">3.5</div>
<div class="b" style="left:826px;top:476px;width:67px;height:21px;border:1px solid #c49a5e;background:#ffffff;"></div>
<div class="t pl" style="left:826px;top:476px;width:66px;height:20px;line-height:20px;text-align:left;">10445</div>
<div class="b" style="left:892px;top:476px;width:195px;height:21px;border:1px solid #c49a5e;background:#ffffff;"></div>
<div class="t pl" style="left:892px;top:476px;width:194px;height:20px;line-height:20px;text-align:left;">Speedy Express</div>
<div class="b" style="left:1086px;top:476px;width:147px;height:21px;border:1px solid #c49a5e;background:#ffffff;"></div>
<div class="t " style="left:1086px;top:476px;width:146px;height:20px;line-height:20px;text-align:center;">3/16/2009</div>
<div class="b" style="left:1232px;top:476px;width:101px;height:21px;border:1px solid #c49a5e;background:#ffffff;"></div>
<div class="t pl" style="left:1232px;top:476px;width:100px;height:20px;line-height:20px;text-align:left;">1</div>
<div class="b" style="left:1332px;top:476px;width:88px;height:21px;border:1px solid #c49a5e;background:#ffffff;"></div>
<div class="t pr" style="left:1332px;top:476px;width:87px;height:20px;line-height:20px;text-align:right;">9.3</div>
<div class="b" style="left:826px;top:496px;width:67px;height:21px;border:1px solid #c49a5e;background:#efebe6;"></div>
<div class="t pl" style="left:826px;top:496px;width:66px;height:20px;line-height:20px;text-align:left;">10524</div>
<div class="b" style="left:892px;top:496px;width:195px;height:21px;border:1px solid #c49a5e;background:#efebe6;"></div>
<div class="t pl" style="left:892px;top:496px;width:194px;height:20px;line-height:20px;text-align:left;">United Package</div>
<div class="b" style="left:1086px;top:496px;width:147px;height:21px;border:1px solid #c49a5e;background:#efebe6;"></div>
<div class="t " style="left:1086px;top:496px;width:146px;height:20px;line-height:20px;text-align:center;">6/1/2009</div>
<div class="b" style="left:1232px;top:496px;width:101px;height:21px;border:1px solid #c49a5e;background:#efebe6;"></div>
<div class="t pl" style="left:1232px;top:496px;width:100px;height:20px;line-height:20px;text-align:left;">2</div>
<div class="b" style="left:1332px;top:496px;width:88px;height:21px;border:1px solid #c49a5e;background:#efebe6;"></div>
<div class="t pr" style="left:1332px;top:496px;width:87px;height:20px;line-height:20px;text-align:right;">244.79</div>
<div class="b" style="left:826px;top:516px;width:67px;height:21px;border:1px solid #c49a5e;background:#ffffff;"></div>
<div class="t pl" style="left:826px;top:516px;width:66px;height:20px;line-height:20px;text-align:left;">10572</div>
<div class="b" style="left:892px;top:516px;width:195px;height:21px;border:1px solid #c49a5e;background:#ffffff;"></div>
<div class="t pl" style="left:892px;top:516px;width:194px;height:20px;line-height:20px;text-align:left;">United Package</div>
<div class="b" style="left:1086px;top:516px;width:147px;height:21px;border:1px solid #c49a5e;background:#ffffff;"></div>
<div class="t " style="left:1086px;top:516px;width:146px;height:20px;line-height:20px;text-align:center;">7/19/2009</div>
<div class="b" style="left:1232px;top:516px;width:101px;height:21px;border:1px solid #c49a5e;background:#ffffff;"></div>
<div class="t pl" style="left:1232px;top:516px;width:100px;height:20px;line-height:20px;text-align:left;">2</div>
<div class="b" style="left:1332px;top:516px;width:88px;height:21px;border:1px solid #c49a5e;background:#ffffff;"></div>
<div class="t pr" style="left:1332px;top:516px;width:87px;height:20px;line-height:20px;text-align:right;">116.43</div>
<div class="b" style="left:826px;top:536px;width:67px;height:21px;border:1px solid #c49a5e;background:#efebe6;"></div>
<div class="t pl" style="left:826px;top:536px;width:66px;height:20px;line-height:20px;text-align:left;">10626</div>
<div class="b" style="left:892px;top:536px;width:195px;height:21px;border:1px solid #c49a5e;background:#efebe6;"></div>
<div class="t pl" style="left:892px;top:536px;width:194px;height:20px;line-height:20px;text-align:left;">United Package</div>
<div class="b" style="left:1086px;top:536px;width:147px;height:21px;border:1px solid #c49a5e;background:#efebe6;"></div>
<div class="t " style="left:1086px;top:536px;width:146px;height:20px;line-height:20px;text-align:center;">9/11/2009</div>
<div class="b" style="left:1232px;top:536px;width:101px;height:21px;border:1px solid #c49a5e;background:#efebe6;"></div>
<div class="t pl" style="left:1232px;top:536px;width:100px;height:20px;line-height:20px;text-align:left;">2</div>
<div class="b" style="left:1332px;top:536px;width:88px;height:21px;border:1px solid #c49a5e;background:#efebe6;"></div>
<div class="t pr" style="left:1332px;top:536px;width:87px;height:20px;line-height:20px;text-align:right;">138.69</div>
<div class="b" style="left:826px;top:556px;width:67px;height:21px;border:1px solid #c49a5e;background:#ffffff;"></div>
<div class="t pl" style="left:826px;top:556px;width:66px;height:20px;line-height:20px;text-align:left;">10654</div>
<div class="b" style="left:892px;top:556px;width:195px;height:21px;border:1px solid #c49a5e;background:#ffffff;"></div>
<div class="t pl" style="left:892px;top:556px;width:194px;height:20px;line-height:20px;text-align:left;">Speedy Express</div>
<div class="b" style="left:1086px;top:556px;width:147px;height:21px;border:1px solid #c49a5e;background:#ffffff;"></div>
<div class="t " style="left:1086px;top:556px;width:146px;height:20px;line-height:20px;text-align:center;">10/3/2009</div>
<div class="b" style="left:1232px;top:556px;width:101px;height:21px;border:1px solid #c49a5e;background:#ffffff;"></div>
<div class="t pl" style="left:1232px;top:556px;width:100px;height:20px;line-height:20px;text-align:left;">1</div>
<div class="b" style="left:1332px;top:556px;width:88px;height:21px;border:1px solid #c49a5e;background:#ffffff;"></div>
<div class="t pr" style="left:1332px;top:556px;width:87px;height:20px;line-height:20px;text-align:right;">55.26</div>
<div class="b" style="left:826px;top:576px;width:67px;height:21px;border:1px solid #c49a5e;background:#efebe6;"></div>
<div class="t pl" style="left:826px;top:576px;width:66px;height:20px;line-height:20px;text-align:left;">10672</div>
<div class="b" style="left:892px;top:576px;width:195px;height:21px;border:1px solid #c49a5e;background:#efebe6;"></div>
<div class="t pl" style="left:892px;top:576px;width:194px;height:20px;line-height:20px;text-align:left;">United Package</div>
<div class="b" style="left:1086px;top:576px;width:147px;height:21px;border:1px solid #c49a5e;background:#efebe6;"></div>
<div class="t " style="left:1086px;top:576px;width:146px;height:20px;line-height:20px;text-align:center;">10/18/2009</div>
<div class="b" style="left:1232px;top:576px;width:101px;height:21px;border:1px solid #c49a5e;background:#efebe6;"></div>
<div class="t pl" style="left:1232px;top:576px;width:100px;height:20px;line-height:20px;text-align:left;">2</div>
<div class="b" style="left:1332px;top:576px;width:88px;height:21px;border:1px solid #c49a5e;background:#efebe6;"></div>
<div class="t pr" style="left:1332px;top:576px;width:87px;height:20px;line-height:20px;text-align:right;">95.75</div>
<div class="b" style="left:826px;top:596px;width:67px;height:21px;border:1px solid #c49a5e;background:#ffffff;"></div>
<div class="t pl" style="left:826px;top:596px;width:66px;height:20px;line-height:20px;text-align:left;">10689</div>
<div class="b" style="left:892px;top:596px;width:195px;height:21px;border:1px solid #c49a5e;background:#ffffff;"></div>
<div class="t pl" style="left:892px;top:596px;width:194px;height:20px;line-height:20px;text-align:left;">United Package</div>
<div class="b" style="left:1086px;top:596px;width:147px;height:21px;border:1px solid #c49a5e;background:#ffffff;"></div>
<div class="t " style="left:1086px;top:596px;width:146px;height:20px;line-height:20px;text-align:center;">11/1/2009</div>
<div class="b" style="left:1232px;top:596px;width:101px;height:21px;border:1px solid #c49a5e;background:#ffffff;"></div>
<div class="t pl" style="left:1232px;top:596px;width:100px;height:20px;line-height:20px;text-align:left;">2</div>
<div class="b" style="left:1332px;top:596px;width:88px;height:21px;border:1px solid #c49a5e;background:#ffffff;"></div>
<div class="t pr" style="left:1332px;top:596px;width:87px;height:20px;line-height:20px;text-align:right;">13.42</div>
<div class="b" style="left:826px;top:616px;width:67px;height:21px;border:1px solid #c49a5e;background:#efebe6;"></div>
<div class="t pl" style="left:826px;top:616px;width:66px;height:20px;line-height:20px;text-align:left;">10733</div>
<div class="b" style="left:892px;top:616px;width:195px;height:21px;border:1px solid #c49a5e;background:#efebe6;"></div>
<div class="t pl" style="left:892px;top:616px;width:194px;height:20px;line-height:20px;text-align:left;">Federal Shipping</div>
<div class="b" style="left:1086px;top:616px;width:147px;height:21px;border:1px solid #c49a5e;background:#efebe6;"></div>
<div class="t " style="left:1086px;top:616px;width:146px;height:20px;line-height:20px;text-align:center;">12/8/2009</div>
<div class="b" style="left:1232px;top:616px;width:101px;height:21px;border:1px solid #c49a5e;background:#efebe6;"></div>
<div class="t pl" style="left:1232px;top:616px;width:100px;height:20px;line-height:20px;text-align:left;">3</div>
<div class="b" style="left:1332px;top:616px;width:88px;height:21px;border:1px solid #c49a5e;background:#efebe6;"></div>
<div class="t pr" style="left:1332px;top:616px;width:87px;height:20px;line-height:20px;text-align:right;">110.11</div>
<div class="b" style="left:826px;top:636px;width:67px;height:21px;border:1px solid #c49a5e;background:#ffffff;"></div>
<div class="t pl" style="left:826px;top:636px;width:66px;height:20px;line-height:20px;text-align:left;">10778</div>
<div class="b" style="left:892px;top:636px;width:195px;height:21px;border:1px solid #c49a5e;background:#ffffff;"></div>
<div class="t pl" style="left:892px;top:636px;width:194px;height:20px;line-height:20px;text-align:left;">Speedy Express</div>
<div class="b" style="left:1086px;top:636px;width:147px;height:21px;border:1px solid #c49a5e;background:#ffffff;"></div>
<div class="t " style="left:1086px;top:636px;width:146px;height:20px;line-height:20px;text-align:center;">1/16/2010</div>
<div class="b" style="left:1232px;top:636px;width:101px;height:21px;border:1px solid #c49a5e;background:#ffffff;"></div>
<div class="t pl" style="left:1232px;top:636px;width:100px;height:20px;line-height:20px;text-align:left;">1</div>
<div class="b" style="left:1332px;top:636px;width:88px;height:21px;border:1px solid #c49a5e;background:#ffffff;"></div>
<div class="t pr" style="left:1332px;top:636px;width:87px;height:20px;line-height:20px;text-align:right;">6.79</div>
<div class="b" style="left:826px;top:656px;width:67px;height:21px;border:1px solid #c49a5e;background:#efebe6;"></div>
<div class="t pl" style="left:826px;top:656px;width:66px;height:20px;line-height:20px;text-align:left;">10837</div>
<div class="b" style="left:892px;top:656px;width:195px;height:21px;border:1px solid #c49a5e;background:#efebe6;"></div>
<div class="t pl" style="left:892px;top:656px;width:194px;height:20px;line-height:20px;text-align:left;">Federal Shipping</div>
<div class="b" style="left:1086px;top:656px;width:147px;height:21px;border:1px solid #c49a5e;background:#efebe6;"></div>
<div class="t " style="left:1086px;top:656px;width:146px;height:20px;line-height:20px;text-align:center;">2/16/2010</div>
<div class="b" style="left:1232px;top:656px;width:101px;height:21px;border:1px solid #c49a5e;background:#efebe6;"></div>
<div class="t pl" style="left:1232px;top:656px;width:100px;height:20px;line-height:20px;text-align:left;">3</div>
<div class="b" style="left:1332px;top:656px;width:88px;height:21px;border:1px solid #c49a5e;background:#efebe6;"></div>
<div class="t pr" style="left:1332px;top:656px;width:87px;height:20px;line-height:20px;text-align:right;">13.32</div>
<div class="b" style="left:826px;top:676px;width:67px;height:21px;border:1px solid #c49a5e;background:#ffffff;"></div>
<div class="t pl" style="left:826px;top:676px;width:66px;height:20px;line-height:20px;text-align:left;">10857</div>
<div class="b" style="left:892px;top:676px;width:195px;height:21px;border:1px solid #c49a5e;background:#ffffff;"></div>
<div class="t pl" style="left:892px;top:676px;width:194px;height:20px;line-height:20px;text-align:left;">United Package</div>
<div class="b" style="left:1086px;top:676px;width:147px;height:21px;border:1px solid #c49a5e;background:#ffffff;"></div>
<div class="t " style="left:1086px;top:676px;width:146px;height:20px;line-height:20px;text-align:center;">2/28/2010</div>
<div class="b" style="left:1232px;top:676px;width:101px;height:21px;border:1px solid #c49a5e;background:#ffffff;"></div>
<div class="t pl" style="left:1232px;top:676px;width:100px;height:20px;line-height:20px;text-align:left;">2</div>
<div class="b" style="left:1332px;top:676px;width:88px;height:21px;border:1px solid #c49a5e;background:#ffffff;"></div>
<div class="t pr" style="left:1332px;top:676px;width:87px;height:20px;line-height:20px;text-align:right;">188.85</div>
<div class="b" style="left:826px;top:696px;width:67px;height:21px;border:1px solid #c49a5e;background:#efebe6;"></div>
<div class="t pl" style="left:826px;top:696px;width:66px;height:20px;line-height:20px;text-align:left;">10866</div>
<div class="b" style="left:892px;top:696px;width:195px;height:21px;border:1px solid #c49a5e;background:#efebe6;"></div>
<div class="t pl" style="left:892px;top:696px;width:194px;height:20px;line-height:20px;text-align:left;">Speedy Express</div>
<div class="b" style="left:1086px;top:696px;width:147px;height:21px;border:1px solid #c49a5e;background:#efebe6;"></div>
<div class="t " style="left:1086px;top:696px;width:146px;height:20px;line-height:20px;text-align:center;">3/5/2010</div>
<div class="b" style="left:1232px;top:696px;width:101px;height:21px;border:1px solid #c49a5e;background:#efebe6;"></div>
<div class="t pl" style="left:1232px;top:696px;width:100px;height:20px;line-height:20px;text-align:left;">1</div>
<div class="b" style="left:1332px;top:696px;width:88px;height:21px;border:1px solid #c49a5e;background:#efebe6;"></div>
<div class="t pr" style="left:1332px;top:696px;width:87px;height:20px;line-height:20px;text-align:right;">109.11</div>
<div class="b" style="left:826px;top:716px;width:67px;height:21px;border:1px solid #c49a5e;background:#ffffff;"></div>
<div class="t pl" style="left:826px;top:716px;width:66px;height:20px;line-height:20px;text-align:left;">10875</div>
<div class="b" style="left:892px;top:716px;width:195px;height:21px;border:1px solid #c49a5e;background:#ffffff;"></div>
<div class="t pl" style="left:892px;top:716px;width:194px;height:20px;line-height:20px;text-align:left;">United Package</div>
<div class="b" style="left:1086px;top:716px;width:147px;height:21px;border:1px solid #c49a5e;background:#ffffff;"></div>
<div class="t " style="left:1086px;top:716px;width:146px;height:20px;line-height:20px;text-align:center;">3/8/2010</div>
<div class="b" style="left:1232px;top:716px;width:101px;height:21px;border:1px solid #c49a5e;background:#ffffff;"></div>
<div class="t pl" style="left:1232px;top:716px;width:100px;height:20px;line-height:20px;text-align:left;">2</div>
<div class="b" style="left:1332px;top:716px;width:88px;height:21px;border:1px solid #c49a5e;background:#ffffff;"></div>
<div class="t pr" style="left:1332px;top:716px;width:87px;height:20px;line-height:20px;text-align:right;">32.37</div>
<div class="b" style="left:826px;top:736px;width:67px;height:21px;border:1px solid #c49a5e;background:#efebe6;"></div>
<div class="t pl" style="left:826px;top:736px;width:66px;height:20px;line-height:20px;text-align:left;">10924</div>
<div class="b" style="left:892px;top:736px;width:195px;height:21px;border:1px solid #c49a5e;background:#efebe6;"></div>
<div class="t pl" style="left:892px;top:736px;width:194px;height:20px;line-height:20px;text-align:left;">United Package</div>
<div class="b" style="left:1086px;top:736px;width:147px;height:21px;border:1px solid #c49a5e;background:#efebe6;"></div>
<div class="t " style="left:1086px;top:736px;width:146px;height:20px;line-height:20px;text-align:center;">4/3/2010</div>
<div class="b" style="left:1232px;top:736px;width:101px;height:21px;border:1px solid #c49a5e;background:#efebe6;"></div>
<div class="t pl" style="left:1232px;top:736px;width:100px;height:20px;line-height:20px;text-align:left;">2</div>
<div class="b" style="left:1332px;top:736px;width:88px;height:21px;border:1px solid #c49a5e;background:#efebe6;"></div>
<div class="t pr" style="left:1332px;top:736px;width:87px;height:20px;line-height:20px;text-align:right;">151.52</div>
<div class="b" style="left:786px;top:770px;width:634px;height:20px;border:1px solid #c49a5e;background:#ffffff;"></div>
<div class="g" style="left:787px;top:770px;height:19px;line-height:19px;">Blauer See Delikatessen</div>
<div class="b" style="left:826px;top:789px;width:67px;height:21px;border:1px solid #c49a5e;background:#f2eadf;"></div>
<div class="h" style="left:826px;top:789px;width:66px;height:20px;line-height:20px;text-align:center;">#</div>
<div class="b" style="left:892px;top:789px;width:195px;height:21px;border:1px solid #c49a5e;background:#f2eadf;"></div>
<div class="h" style="left:892px;top:789px;width:194px;height:20px;line-height:20px;text-align:center;">Shipper</div>
<div class="b" style="left:1086px;top:789px;width:147px;height:21px;border:1px solid #c49a5e;background:#f2eadf;"></div>
<div class="h" style="left:1086px;top:789px;width:146px;height:20px;line-height:20px;text-align:center;">Order Date</div>
<div class="b" style="left:1232px;top:789px;width:101px;height:21px;border:1px solid #c49a5e;background:#f2eadf;"></div>
<div class="h" style="left:1232px;top:789px;width:100px;height:20px;line-height:20px;text-align:center;">Ship Via</div>
<div class="b" style="left:1332px;top:789px;width:88px;height:21px;border:1px solid #c49a5e;background:#f2eadf;"></div>
<div class="h" style="left:1332px;top:789px;width:87px;height:20px;line-height:20px;text-align:center;">Freight</div>
</div></div>

<!-- vertical scrollbar -->
<div class="abs" style="left:1485px;top:110px;width:15px;height:692px;background:#fff;"></div>
<div class="abs" style="left:1485px;top:139px;width:15px;height:663px;background:linear-gradient(#fcfcfc,#efefef);"></div>
<div class="abs" style="left:1485px;top:111px;width:15px;height:14px;border:1px solid #a0a0a0;background:#fff;"></div>
<svg class="abs" style="left:1489px;top:115px" width="8" height="4" viewBox="0 0 8 4"><path d="M0 4L4 0 8 4z" fill="#666"/></svg>
<div class="abs" style="left:1485px;top:126px;width:15px;height:13px;border:1px solid #a0a0a0;background:#fff;"></div>
<div class="abs" style="left:1485px;top:786px;width:15px;height:14px;border:1px solid #a0a0a0;background:#fff;"></div>
<svg class="abs" style="left:1489px;top:791px" width="8" height="4" viewBox="0 0 8 4"><path d="M0 0h8L4 4z" fill="#666"/></svg>
<!-- horizontal scrollbar -->
<div class="abs" style="left:0;top:802px;width:1500px;height:15px;background:#f0f0f0;"></div>
<div class="abs" style="left:0;top:802px;width:14px;height:15px;border:1px solid #d8d8d8;background:#f4f4f4;"></div>
<svg class="abs" style="left:4px;top:806px" width="4" height="7" viewBox="0 0 4 7"><path d="M4 0v7L0 3.5z" fill="#b0b0b0"/></svg>
<div class="abs" style="left:1469px;top:802px;width:14px;height:15px;border:1px solid #d8d8d8;background:#f4f4f4;"></div>
<svg class="abs" style="left:1475px;top:806px" width="4" height="7" viewBox="0 0 4 7"><path d="M0 0v7L4 3.5z" fill="#b0b0b0"/></svg>
<div class="abs" style="left:0;top:817px;width:1500px;height:5px;background:#fdfdfd;"></div>

<!-- bottom toolbar left -->
<div class="tb" style="left:0;top:822px;width:1182px;height:28px;"></div>
<div class="grip" style="left:7px;top:827px;"></div>
<svg class="abs" style="left:19px;top:830px" width="10" height="12" viewBox="0 0 10 12"><rect x="0" y="0" width="3" height="12" fill="#b5cce4"/><path d="M10 0v12L3.5 6z" fill="#b5cce4"/></svg>
<svg class="abs" style="left:45px;top:830px" width="6" height="12" viewBox="0 0 6 12"><path d="M6 0v12L0 6z" fill="#b5cce4"/></svg>
<div class="sep" style="left:62px;top:826px;height:20px;"></div>
<div class="ui" style="left:83px;top:829px;font-size:11.6px;">Page 1 of 25</div>
<div class="sep" style="left:168px;top:826px;height:20px;"></div>
<svg class="abs" style="left:181px;top:830px" width="6" height="11" viewBox="0 0 6 11"><path d="M0 0v11L6 5.5z" fill="#3f7bbd"/></svg>
<svg class="abs" style="left:203px;top:830px" width="9" height="12" viewBox="0 0 9 12"><path d="M0 0v12L6 6z" fill="#3f7bbd"/><rect x="6" y="0" width="3" height="12" fill="#3f7bbd"/></svg>
<div class="ovf" style="left:1169px;top:823px;width:12px;height:26px;"><i style="top:17px"></i><b style="top:20px"></b></div>
<!-- bottom toolbar right -->
<div class="tb" style="left:1186px;top:822px;width:314px;height:28px;"></div>
<div class="grip" style="left:1192px;top:827px;"></div>
<div class="abs" style="left:1221px;top:824px;width:24px;height:24px;background:#c5d8f1;"></div>
<svg class="abs" style="left:1200px;top:825px" width="70" height="22" viewBox="1200 825 70 22" shape-rendering="crispEdges">
 <rect x="1204" y="830" width="10" height="12" fill="#97b5dc"/><rect x="1205" y="831" width="8" height="10" fill="#fff"/>
 <rect x="1228" y="830" width="10" height="5" fill="#97b5dc"/><rect x="1229" y="830" width="8" height="4" fill="#fff"/>
 <rect x="1228" y="836" width="10" height="6" fill="#97b5dc"/><rect x="1229" y="837" width="8" height="5" fill="#fff"/>
 <path d="M1251 830h1v4h3v-4h1v5h-5z M1257 830h1v4h3v-4h1v5h-5z M1251 836h5v5h-1v-4h-3v4h-1z M1257 836h5v5h-1v-4h-3v4h-1z" fill="#97b5dc"/>
</svg>
<div class="sep" style="left:1271px;top:826px;height:20px;"></div>
<div class="ui" style="left:1294px;top:830px;">85%</div>
<div class="abs" style="left:1331px;top:836px;width:8px;height:2px;background:#8fb0d8;"></div>
<div class="abs" style="left:1347px;top:836px;width:120px;height:1px;background:#8fb0d8;"></div>
<div class="abs" style="left:1407px;top:832px;width:1px;height:8px;background:#8fb0d8;"></div>
<div class="abs" style="left:1420px;top:830px;width:3px;height:12px;background:#8fb0d8;"></div>
<div class="abs" style="left:1476px;top:835px;width:8px;height:2px;background:#8fb0d8;"></div>
<div class="abs" style="left:1479px;top:832px;width:2px;height:8px;background:#8fb0d8;"></div>
<div class="ovf" style="left:1486px;top:823px;width:13px;height:26px;"><i style="top:17px"></i><b style="top:20px"></b></div>
</body></html>
